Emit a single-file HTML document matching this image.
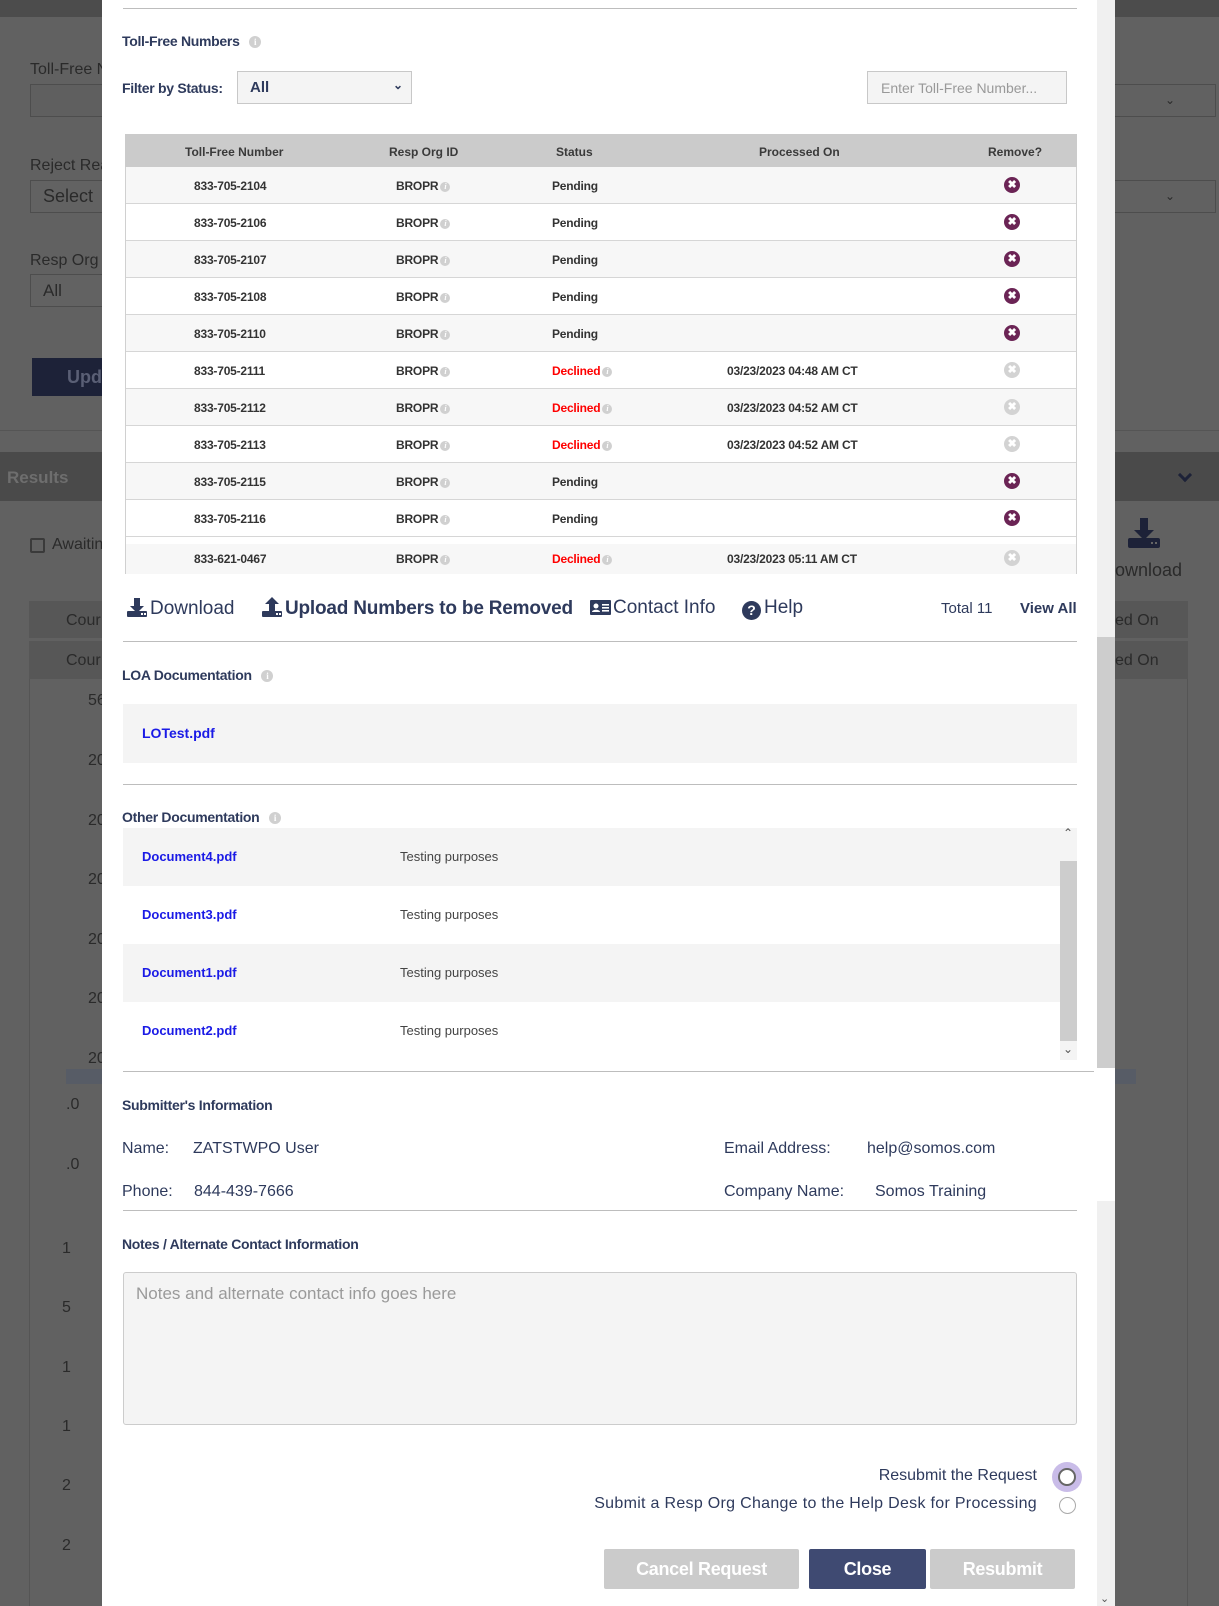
<!DOCTYPE html>
<html><head><meta charset="utf-8"><style>
*{box-sizing:border-box;margin:0;padding:0}
body{width:1219px;height:1606px;overflow:hidden;background:#616161;font-family:"Liberation Sans",sans-serif;position:relative;color:#2e3a5c}
.a{position:absolute}
.bgt{color:#2a2a2a;font-size:16px}
.m{position:absolute;left:102px;top:0;width:1013px;height:1606px;background:#fff}
.hr{position:absolute;height:1px;background:#bdbdbd}
.h{position:absolute;font-size:14px;font-weight:bold;color:#2e3a5c;letter-spacing:-0.3px}
.i{display:inline-block;width:12px;height:12px;border-radius:50%;background:#d0d0d0;color:#fff;font-size:9px;text-align:center;line-height:12px;font-weight:bold;vertical-align:middle;margin-left:6px;font-family:"Liberation Serif",serif}
.si{width:10px;height:10px;line-height:10px;font-size:8px;margin-left:2px}
.tb{position:absolute;left:125px;width:952px}
.row{position:absolute;left:0;width:100%;height:37px;border-bottom:1px solid #d6d6d6;font-size:12px;color:#333;font-weight:bold;letter-spacing:-0.2px}
.row span{position:absolute;top:12px}
.c1{left:68px}.c2{left:270px}.c3{left:426px}.c4{left:601px}
.x{position:absolute;left:878px;top:10px;width:16px;height:16px;border-radius:50%;background:#6b2455;color:#fff;font-size:11px;text-align:center;line-height:16px}
.x.g{background:#d3d3d3}
.dec{color:#f00}
.doc{position:absolute;left:123px;width:937px;height:58px;font-size:13px;font-weight:bold}
.doc .n{position:absolute;left:19px;top:21px;color:#1a1ae6}
.doc .d{position:absolute;left:277px;top:21px;color:#444;font-weight:normal;font-size:13px}
.lbl{position:absolute;font-size:16px;color:#2e3a5c}
.btn{position:absolute;top:1549px;height:40px;color:#fff;font-size:18px;font-weight:bold;text-align:center;line-height:40px;border-radius:2px;letter-spacing:-0.3px}
.act{position:absolute;top:597px;font-size:19px;color:#2e3a5c;white-space:nowrap}
.act svg{vertical-align:-3px;margin-right:2px}
</style></head><body>
<!-- background page -->
<div class="a" style="left:0;top:0;width:1219px;height:17px;background:#4c4c4c"></div>
<div class="a bgt" style="left:30px;top:61px">Toll-Free N</div>
<div class="a" style="left:30px;top:84px;width:80px;height:33px;border:1px solid #4d4d4d;background:#5f5f5f"></div>
<div class="a bgt" style="left:30px;top:157px">Reject Rea</div>
<div class="a" style="left:30px;top:180px;width:80px;height:33px;border:1px solid #4d4d4d;background:#626262;color:#2a2a2a;font-size:18px;padding:5px 12px">Select</div>
<div class="a bgt" style="left:30px;top:252px">Resp Org</div>
<div class="a" style="left:30px;top:274px;width:80px;height:33px;border:1px solid #4d4d4d;background:#626262;color:#2a2a2a;font-size:17px;padding:6px 12px">All</div>
<div class="a" style="left:32px;top:358px;width:80px;height:38px;background:#1d2238;color:#5a5f75;font-size:18px;font-weight:bold;padding:9px 35px">Upd</div>
<div class="a" style="left:0;top:430px;width:1219px;height:1px;background:#555"></div>
<div class="a" style="left:0;top:452px;width:1219px;height:49px;background:#4a4a4a;color:#6e6e6e;font-size:17px;font-weight:bold;padding:16px 7px">Results</div>
<div class="a" style="left:1180px;top:470px;width:10px;height:10px;border-right:3px solid #1d2238;border-bottom:3px solid #1d2238;transform:rotate(45deg)"></div>
<div class="a" style="left:1115px;top:84px;width:72px;height:33px;border:1px solid #4d4d4d;border-left:none;color:#2a2a2a;font-size:12px;padding:8px 50px">⌄</div>
<div class="a" style="left:1115px;top:180px;width:72px;height:33px;border:1px solid #4d4d4d;border-left:none;color:#2a2a2a;font-size:12px;padding:8px 50px">⌄</div>
<div class="a" style="left:30px;top:538px;width:15px;height:15px;border:2px solid #3a3a3a;border-radius:2px"></div>
<div class="a bgt" style="left:52px;top:536px">Awaitin</div>
<svg class="a" style="left:1127px;top:516px" width="34" height="34" viewBox="0 0 34 34"><path d="M13 2h8v12h6l-10 10-10-10h6z" fill="#1d2238"/><rect x="1" y="22" width="32" height="10" rx="2" fill="#1d2238"/><rect x="24" y="26" width="2" height="2" fill="#666"/><rect x="28" y="26" width="2" height="2" fill="#666"/></svg>
<div class="a bgt" style="left:1115px;top:560px;font-size:18px">ownload</div>
<div class="a" style="left:29px;top:601px;width:1159px;height:37px;background:#575757"></div>
<div class="a" style="left:29px;top:641px;width:1159px;height:38px;background:#575757"></div>
<div class="a bgt" style="left:66px;top:612px">Cour</div><div class="a bgt" style="left:66px;top:652px">Cour</div>
<div class="a bgt" style="left:1115px;top:612px">ed On</div><div class="a bgt" style="left:1115px;top:652px">ed On</div>
<div class="a" style="left:29px;top:679px;width:1px;height:927px;background:#555"></div>
<div class="a" style="left:1187px;top:679px;width:1px;height:927px;background:#555"></div>
<div class="a bgt" style="left:88px;top:692px">56</div>
<div class="a bgt" style="left:88px;top:752px">20</div>
<div class="a bgt" style="left:88px;top:812px">20</div>
<div class="a bgt" style="left:88px;top:871px">20</div>
<div class="a bgt" style="left:88px;top:931px">20</div>
<div class="a bgt" style="left:88px;top:990px">20</div>
<div class="a bgt" style="left:88px;top:1050px">20</div>
<div class="a" style="left:66px;top:1069px;width:1070px;height:15px;background:#575c66"></div>
<div class="a bgt" style="left:66px;top:1096px">.0</div>
<div class="a bgt" style="left:66px;top:1156px">.0</div>
<div class="a bgt" style="left:62px;top:1240px">1</div>
<div class="a bgt" style="left:62px;top:1299px">5</div>
<div class="a bgt" style="left:62px;top:1359px">1</div>
<div class="a bgt" style="left:62px;top:1418px">1</div>
<div class="a bgt" style="left:62px;top:1477px">2</div>
<div class="a bgt" style="left:62px;top:1537px">2</div>

<!-- modal -->
<div class="m"></div>
<div class="a" style="left:1097px;top:0;width:18px;height:1606px;background:#f0f0f0"></div>
<div class="a" style="left:1097px;top:637px;width:18px;height:431px;background:#cdcdcd"></div>
<div class="a" style="left:1097px;top:1068px;width:18px;height:133px;background:#fff"></div>

<div class="hr" style="left:123px;top:8px;width:954px"></div>
<div class="h" style="left:122px;top:33px">Toll-Free Numbers <span class="i">i</span></div>
<div class="h" style="left:122px;top:80px;font-size:14px">Filter by Status:</div>
<div class="a" style="left:237px;top:71px;width:175px;height:33px;border:1px solid #c8c8c8;background:#f4f4f4;font-size:15px;font-weight:bold;padding:7px 12px;color:#2e3a5c">All<span style="position:absolute;right:8px;top:6px;font-size:12px">⌄</span></div>
<div class="a" style="left:867px;top:71px;width:200px;height:33px;border:1px solid #c8c8c8;background:#f4f4f4;font-size:14px;padding:8px 13px;color:#999">Enter Toll-Free Number...</div>

<div class="tb" style="top:134px;height:440px;border:1px solid #d0d0d0;border-top:none">
<div class="a" style="left:-1px;top:0;width:952px;height:33px;background:#cbcbcb;font-size:12px;font-weight:bold;color:#3a3a3a">
<span class="a" style="left:60px;top:11px">Toll-Free Number</span>
<span class="a" style="left:264px;top:11px">Resp Org ID</span>
<span class="a" style="left:431px;top:11px">Status</span>
<span class="a" style="left:634px;top:11px">Processed On</span>
<span class="a" style="left:863px;top:11px">Remove?</span>
</div>
<div class="row" style="top:33px;background:#f7f7f7"><span class="c1">833-705-2104</span><span class="c2">BROPR<i class="i si">i</i></span><span class="c3">Pending</span><div class="x">✖</div></div>
<div class="row" style="top:70px"><span class="c1">833-705-2106</span><span class="c2">BROPR<i class="i si">i</i></span><span class="c3">Pending</span><div class="x">✖</div></div>
<div class="row" style="top:107px;background:#f7f7f7"><span class="c1">833-705-2107</span><span class="c2">BROPR<i class="i si">i</i></span><span class="c3">Pending</span><div class="x">✖</div></div>
<div class="row" style="top:144px"><span class="c1">833-705-2108</span><span class="c2">BROPR<i class="i si">i</i></span><span class="c3">Pending</span><div class="x">✖</div></div>
<div class="row" style="top:181px;background:#f7f7f7"><span class="c1">833-705-2110</span><span class="c2">BROPR<i class="i si">i</i></span><span class="c3">Pending</span><div class="x">✖</div></div>
<div class="row" style="top:218px"><span class="c1">833-705-2111</span><span class="c2">BROPR<i class="i si">i</i></span><span class="c3 dec">Declined<i class="i si">i</i></span><span class="c4">03/23/2023 04:48 AM CT</span><div class="x g">✖</div></div>
<div class="row" style="top:255px;background:#f7f7f7"><span class="c1">833-705-2112</span><span class="c2">BROPR<i class="i si">i</i></span><span class="c3 dec">Declined<i class="i si">i</i></span><span class="c4">03/23/2023 04:52 AM CT</span><div class="x g">✖</div></div>
<div class="row" style="top:292px"><span class="c1">833-705-2113</span><span class="c2">BROPR<i class="i si">i</i></span><span class="c3 dec">Declined<i class="i si">i</i></span><span class="c4">03/23/2023 04:52 AM CT</span><div class="x g">✖</div></div>
<div class="row" style="top:329px;background:#f7f7f7"><span class="c1">833-705-2115</span><span class="c2">BROPR<i class="i si">i</i></span><span class="c3">Pending</span><div class="x">✖</div></div>
<div class="row" style="top:366px"><span class="c1">833-705-2116</span><span class="c2">BROPR<i class="i si">i</i></span><span class="c3">Pending</span><div class="x">✖</div></div>
<div class="row" style="top:410px;height:30px;background:#f7f7f7;border-bottom:none"><span class="c1" style="top:8px">833-621-0467</span><span class="c2" style="top:8px">BROPR<i class="i si">i</i></span><span class="c3 dec" style="top:8px">Declined<i class="i si">i</i></span><span class="c4" style="top:8px">03/23/2023 05:11 AM CT</span><div class="x g" style="top:6px">✖</div></div>
</div>

<div class="act" style="left:126px"><svg width="22" height="20" viewBox="0 0 22 20"><path d="M8 1h6v8h4l-7 7-7-7h4z" fill="#2e3a5c"/><rect x="1" y="14" width="20" height="6" rx="1" fill="#2e3a5c"/><rect x="15" y="16" width="2" height="2" fill="#fff"/><rect x="18" y="16" width="2" height="2" fill="#fff"/></svg>Download</div>
<div class="act" style="left:261px;font-weight:bold;letter-spacing:-0.2px"><svg width="22" height="20" viewBox="0 0 22 20"><path d="M11 0l7 7h-4v7h-6v-7h-4z" fill="#2e3a5c"/><rect x="1" y="14" width="20" height="6" rx="1" fill="#2e3a5c"/><rect x="15" y="16" width="2" height="2" fill="#fff"/><rect x="18" y="16" width="2" height="2" fill="#fff"/></svg>Upload Numbers to be Removed</div>
<div class="act" style="left:590px"><svg width="21" height="17" viewBox="0 0 21 17"><rect x="0" y="1" width="21" height="15" rx="1" fill="#2e3a5c"/><circle cx="6" cy="7" r="2.5" fill="#fff"/><path d="M2 13c0-3 8-3 8 0z" fill="#fff"/><rect x="12" y="5" width="7" height="1.6" fill="#fff"/><rect x="12" y="8" width="7" height="1.6" fill="#fff"/><rect x="12" y="11" width="7" height="1.6" fill="#fff"/></svg>Contact Info</div>
<div class="act" style="left:742px"><span style="display:inline-block;width:19px;height:19px;border-radius:50%;background:#2e3a5c;color:#fff;font-size:14px;text-align:center;line-height:19px;font-weight:bold;vertical-align:-2px;margin-right:3px">?</span>Help</div>
<div class="act" style="left:941px;font-size:15px;top:600px">Total 11</div>
<div class="act" style="left:1020px;font-size:15px;top:600px;font-weight:bold">View All</div>

<div class="hr" style="left:123px;top:641px;width:954px"></div>
<div class="h" style="left:122px;top:667px">LOA Documentation <span class="i">i</span></div>
<div class="a" style="left:123px;top:704px;width:954px;height:59px;background:#f4f4f4"><span class="a" style="left:19px;top:21px;color:#1a1ae6;font-size:14px;font-weight:bold">LOTest.pdf</span></div>
<div class="hr" style="left:123px;top:784px;width:954px"></div>
<div class="h" style="left:122px;top:809px">Other Documentation <span class="i">i</span></div>
<div class="doc" style="top:828px;background:#f4f4f4"><span class="n">Document4.pdf</span><span class="d">Testing purposes</span></div>
<div class="doc" style="top:886px"><span class="n">Document3.pdf</span><span class="d">Testing purposes</span></div>
<div class="doc" style="top:944px;background:#f4f4f4"><span class="n">Document1.pdf</span><span class="d">Testing purposes</span></div>
<div class="doc" style="top:1002px"><span class="n">Document2.pdf</span><span class="d">Testing purposes</span></div>
<div class="a" style="left:1060px;top:828px;width:17px;height:232px;background:#f4f4f4"></div>
<div class="a" style="left:1060px;top:861px;width:17px;height:180px;background:#cdcdcd"></div>
<div class="a" style="left:1063px;top:826px;font-size:12px;color:#555">⌃</div>
<div class="a" style="left:1063px;top:1042px;font-size:12px;color:#555">⌄</div>
<div class="hr" style="left:123px;top:1071px;width:971px"></div>

<div class="h" style="left:122px;top:1097px;font-size:14px">Submitter's Information</div>
<div class="lbl" style="left:122px;top:1140px">Name:</div><div class="lbl" style="left:193px;top:1140px">ZATSTWPO User</div>
<div class="lbl" style="left:724px;top:1140px">Email Address:</div><div class="lbl" style="left:867px;top:1140px">help@somos.com</div>
<div class="lbl" style="left:122px;top:1183px">Phone:</div><div class="lbl" style="left:194px;top:1183px">844-439-7666</div>
<div class="lbl" style="left:724px;top:1183px">Company Name:</div><div class="lbl" style="left:875px;top:1183px">Somos Training</div>
<div class="hr" style="left:123px;top:1210px;width:954px"></div>
<div class="h" style="left:122px;top:1236px">Notes / Alternate Contact Information</div>
<div class="a" style="left:123px;top:1272px;width:954px;height:153px;border:1px solid #ccc;border-radius:3px;background:#f4f4f4;color:#9a9a9a;font-size:17px;padding:11px 12px">Notes and alternate contact info goes here</div>

<div class="lbl" style="right:182px;top:1467px">Resubmit the Request</div>
<div class="a" style="left:1052px;top:1462px;width:30px;height:30px;border-radius:50%;background:#c9bce8"></div>
<div class="a" style="left:1058px;top:1468px;width:18px;height:18px;border-radius:50%;border:2px solid #666;background:#fff"></div>
<div class="lbl" style="right:182px;top:1495px;letter-spacing:0.3px">Submit a Resp Org Change to the Help Desk for Processing</div>
<div class="a" style="left:1059px;top:1497px;width:17px;height:17px;border-radius:50%;border:1px solid #aaa;background:#fff"></div>

<div class="btn" style="left:604px;width:195px;background:#cbcbcb">Cancel Request</div>
<div class="btn" style="left:809px;width:117px;background:#3f4a72">Close</div>
<div class="btn" style="left:930px;width:145px;background:#cbcbcb">Resubmit</div>
<div class="a" style="left:1100px;top:1592px;font-size:11px;color:#555">⌄</div>
</body></html>
